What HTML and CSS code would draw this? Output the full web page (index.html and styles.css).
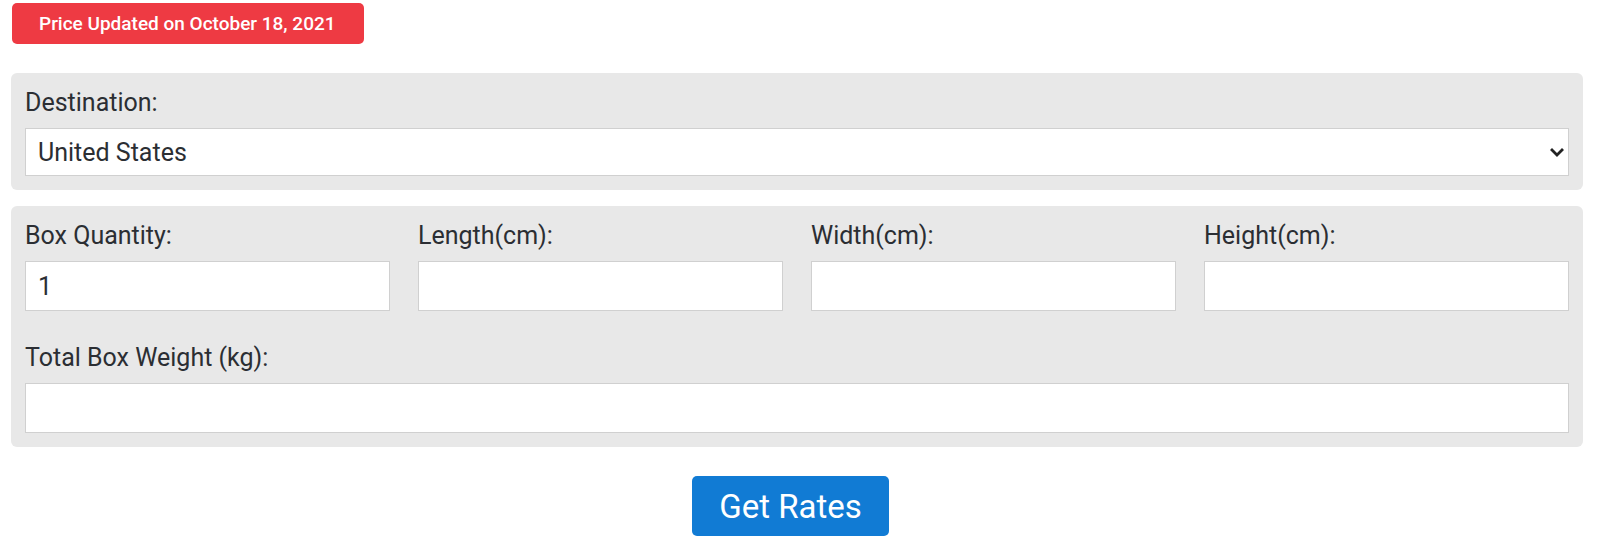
FILE: index.html
```html
<!DOCTYPE html>
<html lang="en">
<head>
    <meta charset="UTF-8" />
    <meta name="viewport" content="width=device-width, initial-scale=1.0" />
    <title>Shipping Rates</title>
    <link rel="stylesheet" href="styles.css">
</head>
<body>
    <div class="page">

        <!-- Price notice -->
        <div class="price-badge">Price Updated on October 18, 2021</div>

        <!-- Destination -->
        <div class="panel">
            <div class="field">
                <label for="destination">Destination:</label>
                <div class="select-wrap">
                    <select id="destination" class="control">
                        <option>United States</option>
                        <option>Canada</option>
                        <option>United Kingdom</option>
                    </select>
                    <svg class="chevron" width="14" height="9" viewBox="0 0 14 9">
                        <path d="M2 2 L7 7 L12 2" fill="none" stroke="#222" stroke-width="2.8" stroke-linecap="square"/>
                    </svg>
                </div>
            </div>
        </div>

        <!-- Box details -->
        <div class="panel">
            <div class="dimensions">
                <div class="field">
                    <label for="qty">Box Quantity:</label>
                    <input id="qty" class="control" type="text" value="1">
                </div>
                <div class="field">
                    <label for="length">Length(cm):</label>
                    <input id="length" class="control" type="text">
                </div>
                <div class="field">
                    <label for="width">Width(cm):</label>
                    <input id="width" class="control" type="text">
                </div>
                <div class="field">
                    <label for="height">Height(cm):</label>
                    <input id="height" class="control" type="text">
                </div>
            </div>
            <div class="field weight-field">
                <label for="weight">Total Box Weight (kg):</label>
                <input id="weight" class="control" type="text">
            </div>
        </div>

        <div class="actions">
            <button class="rates-button">Get Rates</button>
        </div>
    </div>
</body>
</html>
```

FILE: styles.css
```css
* {
    margin: 0;
    padding: 0;
    box-sizing: border-box;
    font-family: Roboto, "Liberation Sans", sans-serif;
}
body {
    background: #ffffff;
    color: #2b2e33;
}
.page {
    width: 1572px;
    margin-left: 11px;
    padding-top: 3px;
}
.price-badge {
    display: inline-flex;
    align-items: center;
    height: 41px;
    margin-left: 1px;
    padding: 0 28px 0 27px;
    background: #ee3a43;
    color: #ffffff;
    font-size: 19px;
    font-weight: 500;
    border-radius: 5px;
}
.panel {
    margin-top: 29px;
    padding: 16px 14px 14px;
    background: #e8e8e8;
    border-radius: 6px;
}
.panel + .panel {
    margin-top: 16px;
}
.field label {
    display: block;
    font-size: 25px;
    line-height: 28px;
    margin-bottom: 11px;
    color: #2b2e33;
}
.control {
    display: block;
    width: 100%;
    height: 50px;
    padding: 0 12px;
    border: 1px solid #d0d0d0;
    background: #ffffff;
    color: #2b2e33;
    font-size: 25px;
    outline: none;
}
.select-wrap {
    position: relative;
}
select.control {
    height: 48px;
    -webkit-appearance: none;
    appearance: none;
    border-radius: 0;
}
.chevron {
    position: absolute;
    right: 5px;
    top: 20px;
    pointer-events: none;
}
.dimensions {
    display: grid;
    grid-template-columns: repeat(4, 1fr);
    gap: 28px;
}
.weight-field {
    margin-top: 33px;
}
.actions {
    display: flex;
    justify-content: center;
    margin-top: 29px;
    padding-right: 13px;
}
.rates-button {
    width: 197px;
    height: 60px;
    background: #117bd4;
    color: #ffffff;
    font-size: 33px;
    border: none;
    border-radius: 5px;
    cursor: pointer;
}
.rates-button:hover {
    background: #0d6dbd;
}
```
